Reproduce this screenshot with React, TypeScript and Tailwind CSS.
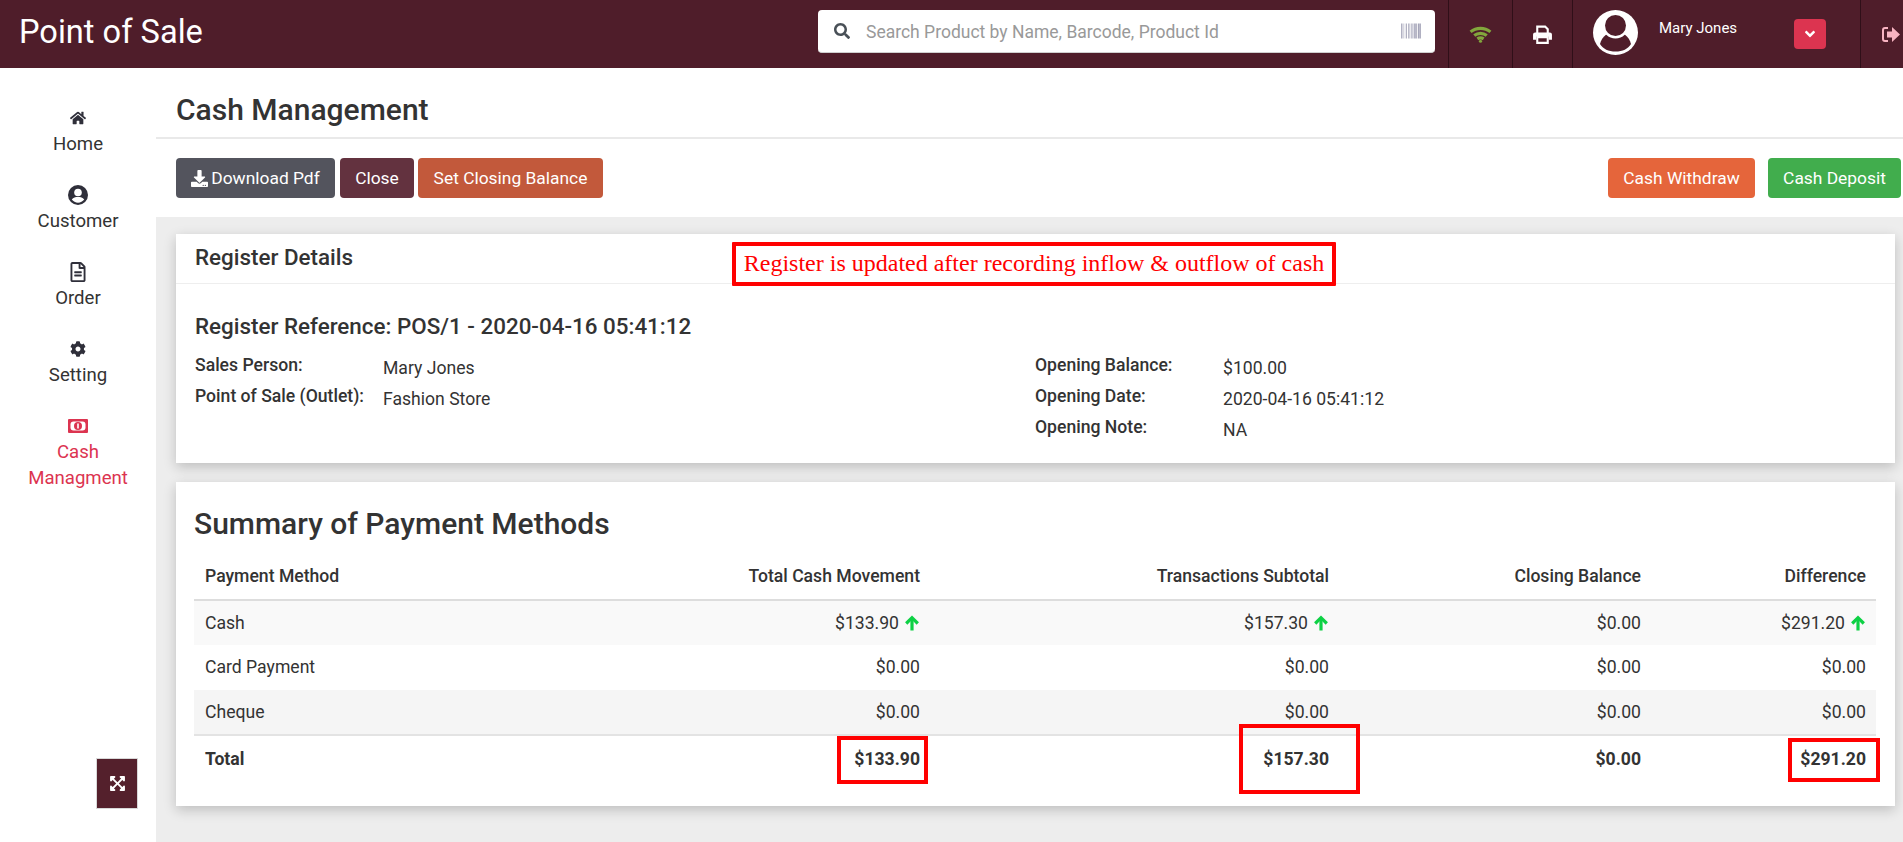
import {
  FaAngleDown,
  FaBarcode,
  FaCog,
  FaDownload,
  FaExpandArrowsAlt,
  FaHome,
  FaRegFileAlt,
  FaSearch,
} from "react-icons/fa";

const CustomerIcon = () => (
  <svg viewBox="0 0 20 20" className="h-[20px] w-[20px]">
    <circle cx="10" cy="10" r="10" fill="#2f2f3a" />
    <circle cx="10" cy="7.500" r="3.800" fill="#fff" />
    <path d="M3.800 14.500c1.500-2 3.500-2.500 6.200-2.500s4.700.5 6.200 2.500c-1.500 2-3.700 3.200-6.200 3.200s-4.700-1.200-6.200-3.200z" fill="#fff" />
  </svg>
);

const MoneyIcon = () => (
  <svg viewBox="0 0 20 14" className="h-[14px] w-[20px]">
    <rect width="20" height="14" rx="1" fill="#dc3450" />
    <rect x="2.500" y="2.500" width="15" height="9" rx="3" fill="#fff" />
    <circle cx="10" cy="7" r="4" fill="#dc3450" />
    <rect x="9.200" y="4.500" width="1.600" height="5" fill="#fff" />
  </svg>
);

const SignOutIcon = () => (
  <svg viewBox="0 0 19 17" className="h-[17px] w-[19px] shrink-0">
    <path d="M7 2H4a2 2 0 0 0-2 2v9a2 2 0 0 0 2 2h3" fill="none" stroke="#f9b4c2" strokeWidth="2" />
    <path d="M6 5.500h5V1l8 7.500-8 7.500v-4.500H6z" fill="#f9b4c2" />
  </svg>
);

const WifiIcon = () => (
  <svg viewBox="0 0 22 16" className="h-[17px] w-[23px]" fill="none" stroke="#82a63c" strokeWidth="3">
    <path d="M1.500 5.500c5.500-4.500 13.500-4.500 19 0" />
    <path d="M5 9c3.500-2.800 8.500-2.800 12 0" />
    <path d="M8 12.200c1.800-1.200 4.200-1.200 6 0" />
    <circle cx="11" cy="14.500" r="1.500" fill="#82a63c" stroke="none" />
  </svg>
);

const PrintIcon = () => (
  <svg viewBox="0 0 20 18" className="h-[19px] w-[21px]">
    <path d="M5 8V1.500h7.500L15 4v4" fill="none" stroke="#fff" strokeWidth="2" />
    <path d="M1 9a2 2 0 0 1 2-2h14a2 2 0 0 1 2 2v5h-3v-3H4v3H1z" fill="#fff" />
    <path d="M5 11.500h10V17H5z" fill="none" stroke="#fff" strokeWidth="2" />
  </svg>
);

const ArrowUpIcon = () => (
  <svg viewBox="0 0 16 16" className="h-[16px] w-[16px]" fill="none" stroke="#0ed145" strokeWidth="3.200">
    <path d="M8 15.500V3" />
    <path d="M2.200 8.500 8 2.700l5.800 5.800" />
  </svg>
);

const navItems = [
  { label: "Home", icon: <FaHome className="text-[16px]" /> },
  { label: "Customer", icon: <CustomerIcon /> },
  { label: "Order", icon: <FaRegFileAlt className="text-[20px]" /> },
  { label: "Setting", icon: <FaCog className="text-[16px]" /> },
];

const rows = [
  { name: "Cash", cash: "$133.90", sub: "$157.30", closing: "$0.00", diff: "$291.20", up: true, bg: "bg-[#f9f9f9]" },
  { name: "Card Payment", cash: "$0.00", sub: "$0.00", closing: "$0.00", diff: "$0.00", up: false, bg: "bg-white" },
  { name: "Cheque", cash: "$0.00", sub: "$0.00", closing: "$0.00", diff: "$0.00", up: false, bg: "bg-[#f5f5f5]" },
];

function Amount({ value, up }: { value: string; up: boolean }) {
  return (
    <span className="inline-flex items-center justify-end gap-[5px]">
      {value}
      {up && <ArrowUpIcon />}
    </span>
  );
}

function Header() {
  return (
    <header className="flex h-[68px] items-stretch bg-[#4f1d2a] text-white">
      <div className="flex w-[818px] items-start pl-[19px] pt-[14px] text-[32.600px] leading-[36px]">Point of Sale</div>
      <div className="w-[630px] pt-[10px]">
        <div className="flex h-[43px] w-[617px] items-center rounded-[4px] border-b border-[#cfcfcf] bg-white">
          <div className="flex w-[48px] justify-center text-[16px] text-[#495057]">
            <FaSearch />
          </div>
          <span className="flex-1 pt-[2px] text-[17.500px] text-[#999]">Search Product by Name, Barcode, Product Id</span>
          <div className="flex w-[48px] justify-center text-[20px] text-[#8f8fa8]">
            <FaBarcode />
          </div>
        </div>
      </div>
      <div className="flex w-[64px] items-center justify-center border-l border-[#2f0f18]">
        <WifiIcon />
      </div>
      <div className="flex w-[60px] items-center justify-center border-l border-[#2f0f18]">
        <PrintIcon />
      </div>
      <div className="flex w-[288px] items-start border-l border-[#2f0f18] pl-[20px] pt-[10px]">
        <svg viewBox="0 0 45 45" className="h-[45px] w-[45px]">
          <circle cx="22.5" cy="22.5" r="22.5" fill="#fff" />
          <path d="M7 34c2-8 8-12 15.500-12S36 26 38 34c-3 5-8.500 7.500-15.500 7.500S10 39 7 34z" fill="#4f1d2a" />
          <circle cx="22.5" cy="15.500" r="13" fill="#fff" />
          <circle cx="22.5" cy="15.500" r="10.500" fill="#4f1d2a" />
        </svg>
        <span className="ml-[21px] w-[135px] pt-[8px] text-[15px] leading-[20px]">Mary Jones</span>
        <div className="mt-[9px] flex h-[30px] w-[32px] items-center justify-center rounded-[4px] bg-[#dc3450] text-[16px]">
          <FaAngleDown />
        </div>
      </div>
      <div className="flex flex-1 items-center border-l border-[#2f0f18] pl-[20px]">
        <SignOutIcon />
      </div>
    </header>
  );
}

function Sidebar() {
  return (
    <aside className="flex w-[156px] shrink-0 flex-col items-center bg-white pt-[40px] text-[18.600px] leading-[26px] text-[#333]">
      {navItems.map((item) => (
        <div key={item.label} className="flex h-[77px] flex-col items-center gap-[3px]">
          <span className="flex h-[20px] items-center text-[#2f2f3a]">{item.icon}</span>
          <span>{item.label}</span>
        </div>
      ))}
      <div className="flex flex-col items-center gap-[3px] text-[#dc3450]">
        <span className="flex h-[20px] items-center">
          <MoneyIcon />
        </span>
        <span className="text-center">
          Cash
          <br />
          Managment
        </span>
      </div>
    </aside>
  );
}

export default function App() {
  return (
    <div className="relative h-[842px] w-[1903px] overflow-hidden bg-[#ededed] font-['Roboto',sans-serif] text-[#333]">
      <Header />
      <div className="flex h-[774px]">
        <Sidebar />
        <main className="flex-1">
          <div className="bg-white">
            <h1 className="flex h-[71px] items-end border-b-2 border-[#e9e9e9] pb-[7px] pl-[20px] text-[30px] leading-[40px] font-medium">
              Cash Management
            </h1>
            <div className="flex h-[78px] items-start justify-between pl-[20px] pr-[2px] pt-[19px] text-[17.400px] text-white">
              <div className="flex gap-[4px]">
                <button className="mr-[1px] flex h-[40px] w-[159px] items-center justify-center gap-[3px] rounded-[4px] bg-[#53545d]">
                  <FaDownload className="text-[17px]" />
                  Download Pdf
                </button>
                <button className="h-[40px] w-[74px] rounded-[4px] bg-[#63323f]">Close</button>
                <button className="h-[40px] w-[185px] rounded-[4px] bg-[#c2593b]">Set Closing Balance</button>
              </div>
              <div className="flex gap-[13px]">
                <button className="h-[40px] w-[147px] rounded-[4px] bg-[#e5653b]">Cash Withdraw</button>
                <button className="h-[40px] w-[133px] rounded-[4px] bg-[#41ad4d]">Cash Deposit</button>
              </div>
            </div>
          </div>

          <section className="ml-[20px] mt-[17px] h-[229px] w-[1719px] bg-white shadow-[0_4px_12px_rgba(0,0,0,0.2)]">
            <div className="flex h-[50px] items-center border-b border-[#eeeeee] pb-[2px] pl-[19px] text-[22.400px] font-medium">
              Register Details
            </div>
            <div className="pl-[19px] pt-[27px]">
              <div className="text-[22.400px] leading-[30px] font-medium">Register Reference: POS/1 - 2020-04-16 05:41:12</div>
              <div className="mt-[9px] flex text-[17.600px] leading-[31px]">
                <div className="grid w-[840px] grid-cols-[188px_1fr] content-start">
                  <span className="font-medium">Sales Person:</span>
                  <span className="pt-[6px] leading-[25px]">Mary Jones</span>
                  <span className="font-medium">Point of Sale (Outlet):</span>
                  <span className="pt-[6px] leading-[25px]">Fashion Store</span>
                </div>
                <div className="grid grid-cols-[188px_1fr] content-start">
                  <span className="font-medium">Opening Balance:</span>
                  <span className="pt-[6px] leading-[25px]">$100.00</span>
                  <span className="font-medium">Opening Date:</span>
                  <span className="pt-[6px] leading-[25px]">2020-04-16 05:41:12</span>
                  <span className="font-medium">Opening Note:</span>
                  <span className="pt-[6px] leading-[25px]">NA</span>
                </div>
              </div>
            </div>
          </section>

          <section className="ml-[20px] mt-[19px] h-[324px] w-[1719px] bg-white px-[18px] shadow-[0_4px_12px_rgba(0,0,0,0.2)]">
            <h2 className="flex h-[80px] items-center pt-[2px] text-[30px] font-medium">Summary of Payment Methods</h2>
            <table className="w-[1682px] border-collapse text-[17.600px]">
              <thead>
                <tr className="h-[38px] border-b-2 border-[#dddddd]">
                  <th className="pb-[9px] pl-[11px] text-left font-medium">Payment Method</th>
                  <th className="w-[300px] pb-[9px] pr-[10px] text-right font-medium">Total Cash Movement</th>
                  <th className="w-[409px] pb-[9px] pr-[10px] text-right font-medium">Transactions Subtotal</th>
                  <th className="w-[312px] pb-[9px] pr-[10px] text-right font-medium">Closing Balance</th>
                  <th className="w-[225px] pb-[9px] pr-[10px] text-right font-medium">Difference</th>
                </tr>
              </thead>
              <tbody>
                {rows.map((row) => (
                  <tr key={row.name} className={`h-[45px] ${row.bg}`}>
                    <td className="pl-[11px]">{row.name}</td>
                    <td className="pr-[10px] text-right">
                      <Amount value={row.cash} up={row.up} />
                    </td>
                    <td className="pr-[10px] text-right">
                      <Amount value={row.sub} up={row.up} />
                    </td>
                    <td className="pr-[10px] text-right">{row.closing}</td>
                    <td className="pr-[10px] text-right">
                      <Amount value={row.diff} up={row.up} />
                    </td>
                  </tr>
                ))}
                <tr className="h-[47px] border-t-2 border-[#e3e3e3] font-bold">
                  <td className="pl-[11px]">Total</td>
                  <td className="pr-[10px] text-right">$133.90</td>
                  <td className="pr-[10px] text-right">$157.30</td>
                  <td className="pr-[10px] text-right">$0.00</td>
                  <td className="pr-[10px] text-right">$291.20</td>
                </tr>
              </tbody>
            </table>
          </section>
        </main>
      </div>

      <button className="absolute left-[96px] top-[758px] flex h-[51px] w-[42px] items-center justify-center border border-[#d8d8d8] bg-[#54202c] text-[17px] text-white">
        <FaExpandArrowsAlt />
      </button>

      <div className="absolute left-[732px] top-[242px] flex h-[44px] w-[604px] items-center justify-center rounded-[1px] border-[4px] border-[#ff0000] bg-white pb-[2px] font-['Liberation_Serif',serif] text-[24px] text-[#ff0000]">
        Register is updated after recording inflow &amp; outflow of cash
      </div>
      <div className="absolute left-[837px] top-[736px] h-[48px] w-[91px] border-[4px] border-[#ff0000]" />
      <div className="absolute left-[1239px] top-[724px] h-[70px] w-[121px] border-[4px] border-[#ff0000]" />
      <div className="absolute left-[1788px] top-[738px] h-[44px] w-[92px] border-[4px] border-[#ff0000]" />
    </div>
  );
}
